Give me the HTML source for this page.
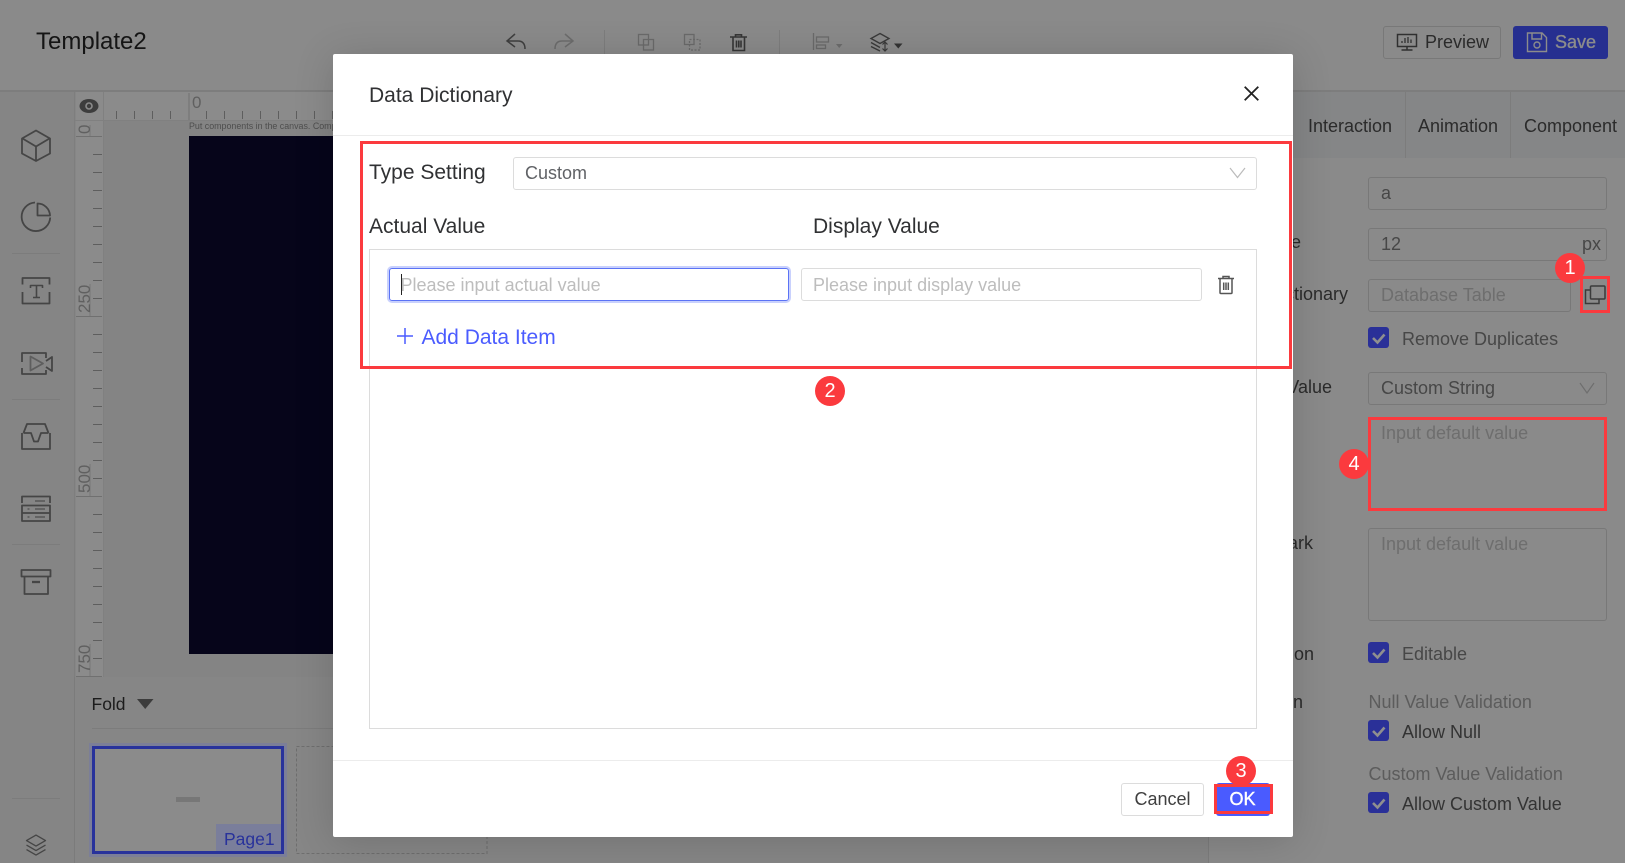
<!DOCTYPE html>
<html><head><meta charset="utf-8"><title>Data Dictionary</title>
<style>
html,body{margin:0;padding:0;width:1626px;height:863px;overflow:hidden;background:#8a8a8a;font-family:"Liberation Sans",Arial,sans-serif;color:#2b2b2b}
.a{position:absolute;box-sizing:border-box}
.t{position:absolute;white-space:nowrap;line-height:24px;font-size:18px}
.b{font-size:21px}
.in{position:absolute;box-sizing:border-box;border:1px solid #787878;border-radius:3px}
.cb{position:absolute;width:21px;height:21px;background:#2a3098;border-radius:3px;left:1368px}
.cb svg{display:block}
.badge{position:absolute;width:30px;height:30px;border-radius:50%;background:#fb3a3e;color:#fff;font-size:20px;line-height:30px;text-align:center}
.red{position:absolute;box-sizing:border-box;border:3px solid #fb3a3e}
.dk{color:#474747}.ph{color:#6e6e6e}
.m .in{border-color:#dcdcdc}
.mph{color:#bdbdbd}
</style></head><body>

<div class="a" style="left:0;top:92px;width:75px;height:771px;background:#858585"></div>
<div class="a" style="left:75px;top:92px;width:258px;height:585px;background:#848484"></div>
<div class="a" style="left:75px;top:677px;width:1133px;height:186px;background:#868686"></div>
<div class="a" style="left:1293px;top:92px;width:333px;height:66px;background:#858687"></div>
<div class="a" style="left:1208px;top:770px;width:1px;height:93px;background:#7c7c7c"></div>
<div class="a" style="left:75px;top:92px;width:29px;height:585px;background:#8b8b8b"></div>
<div class="a" style="left:104px;top:92px;width:230px;height:28px;background:#8b8b8b"></div>
<div class="a" style="left:189px;top:136px;width:144px;height:518px;background:#06051a"></div>
<div class="a" style="left:0;top:90px;width:1626px;height:2px;background:#7d7d7d"></div>
<div class="a" style="left:1625px;top:0;width:1px;height:863px;background:#fff"></div>

<svg class="a" style="left:0;top:0" width="1626" height="863" viewBox="0 0 1626 863" fill="none" font-family="Liberation Sans, Arial, sans-serif">
  <!-- sidebar borders -->
  <path d="M74.5 92V863" stroke="#7b7b7b"/>
  <path d="M12 253.5H60M12 399.5H60M12 544.5H60M12 798.5H60" stroke="#7c7c7c"/>
  <!-- rulers -->
  <path d="M103.5 92V677M75 120.5H334M75 92V677" stroke="#808080"/>
  <g stroke="#5e5e5e" stroke-width="1">
    <path d="M116.5 111V119M134.5 111V119M152.5 111V119M170.5 111V119M206.5 111V119M224.5 111V119M242.5 111V119M260.5 111V119M278.5 111V119M296.5 111V119M314.5 111V119M332.5 111V119"/>
    <path d="M189 93V120" stroke="#707070"/>
    <path d="M93 154.5H102M93 172.5H102M93 190.5H102M93 208.5H102M93 226.5H102M93 244.5H102M93 262.5H102M93 280.5H102M93 298.5H102M93 334.5H102M93 352.5H102M93 370.5H102M93 388.5H102M93 406.5H102M93 424.5H102M93 442.5H102M93 460.5H102M93 478.5H102M93 514.5H102M93 532.5H102M93 550.5H102M93 568.5H102M93 586.5H102M93 604.5H102M93 622.5H102M93 640.5H102M93 658.5H102"/>
    <path d="M76 136.5H102M76 316.5H102M76 496.5H102M76 676.5H102" stroke="#707070"/>
    <path d="M90 125V136M90 284V316M90 464V496M90 644V676" stroke="#777"/>
  </g>
  <g fill="#606060" font-size="17">
    <text x="192" y="108">0</text>
    <text transform="translate(90 134) rotate(-90)">0</text>
    <text transform="translate(90 313) rotate(-90)">250</text>
    <text transform="translate(90 493) rotate(-90)">500</text>
    <text transform="translate(90 673) rotate(-90)">750</text>
  </g>
  <text x="189" y="129" fill="#4e4e4e" font-size="8.9">Put components in the canvas. Comp</text>
  <ellipse cx="89" cy="106" rx="9.5" ry="7" fill="#3d3d3d"/>
  <circle cx="89" cy="106" r="3" fill="#3d3d3d" stroke="#8b8b8b" stroke-width="1.6"/>

  <!-- left icons -->
  <g stroke="#454545" stroke-width="1.8" stroke-linejoin="round">
    <path d="M36 130.5L50 138.5V153.5L36 161L22 153.5V138.5Z"/>
    <path d="M22.5 138.5L36 146.5L49.5 138.5M36 146.5V161"/>
    <path d="M35 202.5A14.3 14.3 0 1 0 50.2 217.5"/>
    <path d="M37.5 203.5A12.5 12.5 0 0 1 50 215.5H37.5Z"/>
    <path d="M22.5 284.5V278H49.5V284.5M22.5 292V303.5H49.5V292"/>
    <path d="M30.5 288V285.5H42.5V288M36.5 285.5V297.5M33 297.5H40" stroke-width="1.6"/>
    <path d="M22 362V353H46V358M22 368V374H46V370M46 361L52 357V371L46 367"/>
    <path d="M30.5 356.5L43 363.5L30.5 370.5Z" stroke="#5e5e5e"/>
    <path d="M22 433V449H50V433"/>
    <path d="M23.5 433L27 424H45L48.5 433"/>
    <path d="M23.5 433H31L34 441.500H38L41 433H48.5"/>
    <path d="M22 503V496.500H50V503M22 505.500H50V513H22ZM22 513H50V521H22Z"/>
    <path d="M35 501H45M35 509H45M35 517H45" stroke="#5e5e5e"/>
    <path d="M27.500 509H29.500M27.500 517H29.500" stroke="#5e5e5e"/>
    <rect x="21.500" y="570" width="29" height="6.500"/>
    <path d="M24.500 577V594H48V577"/>
    <path d="M32 582H40" stroke-width="2.300"/>
    <path d="M36 835L45.500 840.500L36 846L26.500 840.500Z" stroke-width="1.300"/>
    <path d="M26.500 845L36 850.500L45.500 845M26.500 849.500L36 855L45.500 849.500" stroke-width="1.300"/>
  </g>

  <!-- toolbar -->
  <path d="M604.500 30V54M779.500 30V54" stroke="#7d7d7d"/>
  <path d="M515 34L507 41L515 47M507 41H518Q525 41 525 49" stroke="#3f3f3f" stroke-width="1.500"/>
  <path d="M565 34L573 41L565 47M573 41H562Q555 41 555 49" stroke="#6c6c6c" stroke-width="1.500"/>
  <g stroke="#6a6a6a" stroke-width="1.300">
    <rect x="638.500" y="34.500" width="10" height="10.500"/>
    <rect x="643.500" y="39.500" width="10" height="10.500"/>
    <rect x="684.500" y="34.500" width="9.500" height="10"/>
    <rect x="689.500" y="39.500" width="10.500" height="10.500" stroke-dasharray="2 1.500"/>
    <path d="M813.500 33V50" />
    <rect x="816.500" y="37" width="12" height="5"/>
    <rect x="816.500" y="45" width="9" height="3.500"/>
  </g>
  <path d="M836 44H842.500L839.200 48Z" fill="#6c6c6c"/>
  <path d="M730 37H747M735.500 37V34.800H741.500V37M733 37.500V50.500H744.500V37.500M736.500 40.500V47.500M738.800 40.500V47.500M741 40.500V47.500" stroke="#363636" stroke-width="1.600"/>
  <g stroke="#3a3a3a" stroke-width="1.400">
    <path d="M880 33.500L889 38.500L880 43.500L871 38.500Z"/>
    <path d="M871 42.500L880 47.500M871 46.500L880 51"/>
    <path d="M885 42V51M882.500 44.500L885 42L887.500 44.500M882.500 48.500L885 51L887.500 48.500" stroke-width="1.200"/>
  </g>
  <path d="M894 43.500H902.500L898.300 48.500Z" fill="#333"/>

  <!-- preview -->
  <path d="M1397.500 34.500H1416.500V46.500H1397.500ZM1407 46.500V50M1401.500 50H1412.500" stroke="#303030" stroke-width="1.500"/>
  <path d="M1402 43V41M1405 43V38M1408 43V37M1411 43V39.500" stroke="#303030" stroke-width="1.300"/>

  <!-- bottom left -->
  <path d="M92 728.500H333" stroke="#7c7c7c"/>
  <path d="M137 699H153.500L145.200 709Z" fill="#3c3c3c"/>
  <rect x="296.500" y="746.500" width="190.500" height="107" stroke="#6e6e6e" stroke-dasharray="3 2"/>

  <!-- right small select chevron / copy -->
  <path d="M1580 383L1587 393L1594 383" stroke="#6e6e6e" stroke-width="1.200"/>
  <rect x="1590.500" y="286" width="14.500" height="13" rx="1" stroke="#3b3b3b" stroke-width="1.500"/>
  <path d="M1590 290H1585.500V303.500H1599V299" stroke="#3b3b3b" stroke-width="1.500"/>
</svg>

<!-- thumbnail -->
<div class="a" style="left:89px;top:743px;width:198px;height:114px;background:#7b7e98"></div>
<div class="a" style="left:92px;top:746px;width:192px;height:108px;border:3px solid #28329b;background:#8b8b8b"></div>
<div class="a" style="left:176px;top:797px;width:24px;height:5px;background:#777"></div>
<div class="a" style="left:216px;top:824px;width:65px;height:27px;background:#7a7e9b"></div>
<div class="t" style="left:224px;top:827px;font-size:17.5px;color:#28329b">Page1</div>
<div class="t" style="left:91.500px;top:692px;font-size:17.5px;color:#1c1c1c">Fold</div>
<div class="t" style="left:36px;top:30px;font-size:24px;color:#151515">Template2</div>

<!-- top right buttons -->
<div class="in" style="left:1383px;top:26px;width:118px;height:33px"></div>
<div class="t" style="left:1425px;top:30px;color:#2b2b2b">Preview</div>
<div class="a" style="left:1513px;top:26px;width:95px;height:33px;background:#262f90;border-radius:3px;z-index:0"></div>
<svg class="a" style="left:1513px;top:26px" width="95" height="33" fill="none"><path d="M14.500 7H29L33.500 11.500V25.500H14.500ZM19 7V13H28.500V7" stroke="#8c8c8c" stroke-width="1.400"/><circle cx="24" cy="19" r="3" stroke="#8c8c8c" stroke-width="1.400"/></svg>
<div class="t" style="left:1555px;top:30px;color:#8c8c8c;-webkit-text-stroke:.35px #8c8c8c">Save</div>

<!-- tabs -->
<div class="a" style="left:1405px;top:92px;width:1px;height:66px;background:#7c7c7c"></div>
<div class="a" style="left:1510px;top:92px;width:1px;height:66px;background:#7c7c7c"></div>
<div class="t" style="left:1308px;top:114px">Interaction</div>
<div class="t" style="left:1418px;top:114px">Animation</div>
<div class="t" style="left:1524px;top:114px">Component</div>

<!-- right labels -->
<div class="t" style="right:325px;top:230px">Font Size</div>
<div class="t" style="right:278px;top:282px">Data Dictionary</div>
<div class="t" style="right:294px;top:375px">Default Value</div>
<div class="t" style="right:313px;top:531px">Watermark</div>
<div class="t" style="right:312px;top:642px">Validation</div>
<div class="t" style="right:323px;top:690px">Validation</div>

<!-- right form -->
<div class="in" style="left:1368px;top:177px;width:239px;height:33px"></div>
<div class="t dk" style="left:1381px;top:181px">a</div>
<div class="in" style="left:1368px;top:228px;width:239px;height:33px"></div>
<div class="t dk" style="left:1381px;top:232px">12</div>
<div class="t dk" style="left:1582px;top:232px">px</div>
<div class="in" style="left:1368px;top:279px;width:203px;height:33px"></div>
<div class="t ph" style="left:1381px;top:283px">Database Table</div>
<div class="red" style="left:1580px;top:276px;width:30px;height:37px"></div>
<div class="cb" style="top:327px"><svg width="21" height="21" fill="none"><path d="M5 11L9.500 15.500L16.500 7.500" stroke="#8f8f8f" stroke-width="2.600"/></svg></div>
<div class="t dk" style="left:1402px;top:327px">Remove Duplicates</div>
<div class="in" style="left:1368px;top:372px;width:239px;height:33px"></div>
<div class="t dk" style="left:1381px;top:376px">Custom String</div>
<div class="red" style="left:1368px;top:417px;width:239px;height:94px"></div>
<div class="t ph" style="left:1381px;top:421px">Input default value</div>
<div class="in" style="left:1368px;top:528px;width:239px;height:93px"></div>
<div class="t ph" style="left:1381px;top:532px">Input default value</div>
<div class="cb" style="top:642px"><svg width="21" height="21" fill="none"><path d="M5 11L9.500 15.500L16.500 7.500" stroke="#8f8f8f" stroke-width="2.600"/></svg></div>
<div class="t dk" style="left:1402px;top:642px">Editable</div>
<div class="t" style="left:1368.500px;top:690px;color:#5c5c5c">Null Value Validation</div>
<div class="cb" style="top:720px"><svg width="21" height="21" fill="none"><path d="M5 11L9.500 15.500L16.500 7.500" stroke="#8f8f8f" stroke-width="2.600"/></svg></div>
<div class="t" style="left:1402px;top:720px;color:#333">Allow Null</div>
<div class="t" style="left:1368.500px;top:762px;color:#5c5c5c">Custom Value Validation</div>
<div class="cb" style="top:792px"><svg width="21" height="21" fill="none"><path d="M5 11L9.500 15.500L16.500 7.500" stroke="#8f8f8f" stroke-width="2.600"/></svg></div>
<div class="t" style="left:1402px;top:792px;color:#333">Allow Custom Value</div>
<div class="badge" style="left:1555px;top:253px">1</div>
<div class="badge" style="left:1339px;top:449px">4</div>

<!-- modal -->
<div class="a m" style="left:333px;top:54px;width:960px;height:783px;background:#fff;border-radius:2px;box-shadow:0 4px 40px rgba(0,0,0,.16)">
  <div class="a" style="left:0;top:81px;width:960px;height:1px;background:#ececec"></div>
  <div class="a" style="left:0;top:706px;width:960px;height:1px;background:#ececec"></div>
</div>
<div class="t b" style="left:369px;top:84px;color:#303133">Data Dictionary</div>
<svg class="a" style="left:1244px;top:86px" width="15" height="15" fill="none"><path d="M.7.7L14.300 14.300M14.300.7L.7 14.300" stroke="#222" stroke-width="1.800"/></svg>

<div class="t b" style="left:369px;top:161px;color:#303133">Type Setting</div>
<div class="in" style="left:513px;top:157px;width:744px;height:33px;border-color:#dcdcdc"></div>
<div class="t" style="left:525px;top:161px;color:#606266">Custom</div>
<svg class="a" style="left:1229px;top:166px" width="17" height="14" fill="none"><path d="M1 2L8.500 11.500L16 2" stroke="#bbb" stroke-width="1.200"/></svg>

<div class="t b" style="left:369px;top:215px;color:#303133">Actual Value</div>
<div class="t b" style="left:813px;top:215px;color:#303133">Display Value</div>

<div class="a" style="left:369px;top:249px;width:888px;height:480px;border:1px solid #dcdcdc"></div>
<div class="a" style="left:389px;top:268px;width:400px;height:33px;border:1px solid #5b73f5;border-radius:3px;box-shadow:0 0 0 2px #c9d1fd"></div>
<div class="a" style="left:401px;top:274px;width:1px;height:21px;background:#222"></div>
<div class="t mph" style="left:400.500px;top:273px">Please input actual value</div>
<div class="in" style="left:801px;top:268px;width:401px;height:33px;border-color:#dcdcdc"></div>
<div class="t mph" style="left:813px;top:273px">Please input display value</div>
<svg class="a" style="left:1217px;top:275px" width="18" height="20" fill="none"><path d="M1 3.500H17M6 3.500V1.500H12V3.500M3 4V17.500A1 1 0 0 0 4 18.500H14A1 1 0 0 0 15 17.500V4M6.700 7.500V15M9 7.500V15M11.300 7.500V15" stroke="#555" stroke-width="1.500"/></svg>
<svg class="a" style="left:397px;top:328px" width="16" height="16" fill="none"><path d="M8 0V16M0 8H16" stroke="#4b5cff" stroke-width="1.500"/></svg>
<div class="t b" style="left:421.500px;top:326px;color:#4b5cff">Add Data Item</div>

<div class="red" style="left:360px;top:141px;width:932px;height:228px"></div>
<div class="badge" style="left:815px;top:376px">2</div>

<div class="in" style="left:1121px;top:783px;width:83px;height:33px;border-color:#dcdcdc"></div>
<div class="t" style="left:1134.500px;top:787px;color:#404040">Cancel</div>
<div class="a" style="left:1216px;top:783px;width:54px;height:33px;background:#4a5bff;border-radius:3px"></div>
<div class="t" style="left:1229.500px;top:787px;color:#fff;-webkit-text-stroke:.4px #fff">OK</div>
<div class="red" style="left:1214px;top:784px;width:59px;height:30px"></div>
<div class="badge" style="left:1226px;top:756px">3</div>
</body></html>
